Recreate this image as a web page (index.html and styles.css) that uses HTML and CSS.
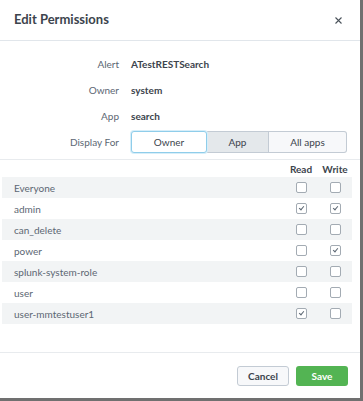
FILE: index.html
```
<!DOCTYPE html>
<html>
<head>
<meta charset="utf-8">
<link rel="stylesheet" href="styles.css">
</head>
<body>
<div class="modal">
  <div class="header">
    <span class="title">Edit Permissions</span>
    <svg class="close" width="9" height="9" viewBox="0 0 9 9"><path d="M1.5 1.5L7.5 7.5M7.5 1.5L1.5 7.5" stroke="#4a525a" stroke-width="1.1" fill="none"/></svg>
  </div>
  <div class="details">
    <span class="label">Alert</span><span class="value">ATestRESTSearch</span>
    <span class="label">Owner</span><span class="value">system</span>
    <span class="label">App</span><span class="value">search</span>
    <span class="label">Display For</span>
    <div class="seg">
      <span class="seg-btn seg-owner">Owner</span>
      <span class="seg-btn seg-app">App</span>
      <span class="seg-btn seg-all">All apps</span>
    </div>
  </div>
  <div class="table">
    <div class="row head"><span></span><span class="col">Read</span><span class="col">Write</span></div>
    <div class="row stripe"><span class="name">Everyone</span><span class="col"><i class="cb"></i></span><span class="col"><i class="cb"></i></span></div>
    <div class="row"><span class="name">admin</span><span class="col"><i class="cb on"></i></span><span class="col"><i class="cb on"></i></span></div>
    <div class="row stripe"><span class="name">can_delete</span><span class="col"><i class="cb"></i></span><span class="col"><i class="cb"></i></span></div>
    <div class="row"><span class="name">power</span><span class="col"><i class="cb"></i></span><span class="col"><i class="cb on"></i></span></div>
    <div class="row stripe"><span class="name">splunk-system-role</span><span class="col"><i class="cb"></i></span><span class="col"><i class="cb"></i></span></div>
    <div class="row"><span class="name">user</span><span class="col"><i class="cb"></i></span><span class="col"><i class="cb"></i></span></div>
    <div class="row stripe"><span class="name">user-mmtestuser1</span><span class="col"><i class="cb on"></i></span><span class="col"><i class="cb"></i></span></div>
  </div>
  <div class="footer">
    <span class="btn cancel">Cancel</span>
    <span class="btn save">Save</span>
  </div>
</div>
</body>
</html>
```
FILE: styles.css
```
html, body {
  margin: 0;
  padding: 0;
}
body {
  background: #707070;
  font-family: Lato, "Liberation Sans", sans-serif;
  width: 363px;
  height: 401px;
  overflow: hidden;
}
.modal {
  width: 360px;
  height: 398px;
  background: #fff;
  display: flex;
  flex-direction: column;
}
.header {
  height: 40px;
  border-bottom: 1px solid #e1e6eb;
  display: flex;
  align-items: center;
  justify-content: space-between;
  padding: 0 17px 0 14px;
  flex: none;
}
.title {
  font-size: 13px;
  font-weight: 700;
  color: #3c444d;
  position: relative;
  top: -1px;
}
.close {
  display: block;
}
.details {
  display: grid;
  grid-template-columns: 119px 216px;
  grid-auto-rows: 22px;
  column-gap: 12px;
  row-gap: 4px;
  padding-top: 12px;
  margin-bottom: 6px;
  align-items: center;
}
.label {
  text-align: right;
  font-size: 10px;
  color: #5c6773;
}
.value {
  font-size: 10px;
  font-weight: 700;
  color: #3c444d;
}
.seg {
  display: flex;
  height: 22px;
}
.seg-btn {
  display: flex;
  align-items: center;
  justify-content: center;
  font-size: 10px;
  color: #3c444d;
  box-sizing: border-box;
  border: 1px solid #c3cbd4;
}
.seg-owner {
  width: 76px;
  background: #fff;
  border: 1.5px solid #8fcdea;
  border-radius: 3px;
  box-shadow: 0 0 0 1px #d7eef9;
  position: relative;
  z-index: 1;
}
.seg-app {
  width: 62px;
  background: #e4e8eb;
  border-left: none;
}
.seg-all {
  width: 78px;
  background: #f7f8fa;
  border-left: none;
  border-radius: 0 3px 3px 0;
}
.table {
  border-top: 1px solid #e8ebee;
  padding: 0 8px 0 2px;
}
.row {
  display: grid;
  grid-template-columns: 1fr 34px 34px;
  height: 21px;
  align-items: center;
  padding-left: 12px;
}
.row.head {
  height: 17px;
  font-size: 10px;
  font-weight: 700;
  color: #3c444d;
}
.stripe {
  background: #f2f4f5;
}
.name {
  font-size: 10px;
  color: #5c6773;
}
.col {
  display: flex;
  justify-content: center;
}
.cb {
  display: block;
  width: 9px;
  height: 9px;
  border: 1px solid #a3abb3;
  border-radius: 2px;
  background: #fff;
  position: relative;
}
.cb.on::after {
  content: "";
  position: absolute;
  left: 3px;
  top: 1px;
  width: 2px;
  height: 4px;
  border-right: 1px solid #5c6773;
  border-bottom: 1px solid #5c6773;
  transform: rotate(40deg);
}
.footer {
  margin-top: auto;
  height: 46px;
  border-top: 1px solid #e8ebee;
  box-sizing: border-box;
  display: flex;
  justify-content: flex-end;
  align-items: center;
  gap: 7px;
  padding-right: 12px;
}
.btn {
  width: 52px;
  height: 20px;
  box-sizing: border-box;
  border-radius: 3px;
  display: flex;
  align-items: center;
  justify-content: center;
  font-size: 10px;
  font-weight: 700;
}
.cancel {
  background: #f7f8fa;
  border: 1px solid #c3cbd4;
  color: #3c444d;
}
.save {
  background: #53b453;
  color: #fff;
}
```
